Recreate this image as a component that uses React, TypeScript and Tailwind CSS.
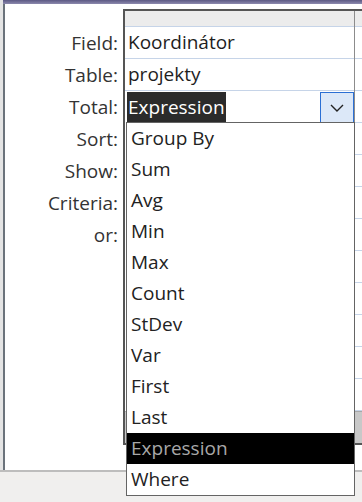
import React from "react";

const labels = ["Field:", "Table:", "Total:", "Sort:", "Show:", "Criteria:", "or:"];
const items = ["Group By", "Sum", "Avg", "Min", "Max", "Count", "StDev", "Var", "First", "Last", "Expression", "Where"];

export default function App() {
  const rowCount = 12;
  return (
    <div className="w-[362px] h-[502px] bg-[#f0efee] flex flex-col relative overflow-hidden font-['Open_Sans',sans-serif] text-[19px] leading-none">
      <div className="flex h-[470px]">
        <div className="w-[3px] bg-[#e4e4e4]" />
        <div className="flex-1 flex flex-col">
          <div className="h-[4px] bg-gradient-to-b from-[#5c5983] to-[#8c89ae]" />
          <div className="flex-1 flex border-l-2 border-[#6b737b] bg-white">
            <div className="w-[118px] pt-[23px] pr-[5px] flex flex-col items-end text-[#333333]">
              {labels.map((l) => (
                <div key={l} className="h-[32px] flex items-center">{l}</div>
              ))}
            </div>
            <div className="flex-1 pt-[5px]">
              <div className="h-[436px] border-t-2 border-l-2 border-b-2 border-[#555555] flex flex-col">
                <div className="flex-1 flex">
                  <div className="w-[230px] border-r border-[#8c8c8c] flex flex-col">
                    <div className="h-[16px] bg-[#ececec] border-b border-[#c6d4e8]" />
                    <div className="h-[32px] border-b border-[#c6d4e8] flex items-center pl-[3px] text-[#1e1e1e]">Koordinátor</div>
                    <div className="h-[32px] border-b border-[#c6d4e8] flex items-center pl-[3px] text-[#1e1e1e]">projekty</div>
                    <div className="h-[32px] flex items-stretch justify-between pl-[2px]">
                      <div className="my-[1px] bg-[#2b2b2b] text-white flex items-center px-[1px]">Expression</div>
                      <div className="mt-[1px] w-[34px] h-[31px] bg-[#dce8f8] border border-[#2b6fd4] flex items-center justify-center">
                        <svg width="14" height="8" viewBox="0 0 14 8" fill="none">
                          <path d="M1 1 L7 7 L13 1" stroke="#222" strokeWidth="1.4" />
                        </svg>
                      </div>
                    </div>
                  </div>
                  <div className="flex-1 flex flex-col">
                    <div className="h-[16px] bg-[#ececec] border-b border-[#c6d4e8]" />
                    {Array.from({ length: rowCount }).map((_, i) => (
                      <div key={i} className="h-[32px] border-b border-[#c6d4e8]" />
                    ))}
                  </div>
                </div>
                <div className="h-[33px] bg-[#c8c8c8] border-t border-[#a8a8a8]" />
              </div>
            </div>
          </div>
        </div>
      </div>
      <div className="h-[2px] bg-[#bdbdbd]" />
      <div className="flex-1 bg-[#f0efee]" />

      <div className="absolute left-[126px] top-[122px] w-[229px] border border-[#646464] bg-white">
        {items.map((it) => (
          <div
            key={it}
            className={
              it === "Expression"
                ? "h-[31px] flex items-center pl-[4px] bg-black text-[#a8a8a8]"
                : "h-[31px] flex items-center pl-[4px] text-[#222222]"
            }
          >
            {it}
          </div>
        ))}
      </div>
    </div>
  );
}
